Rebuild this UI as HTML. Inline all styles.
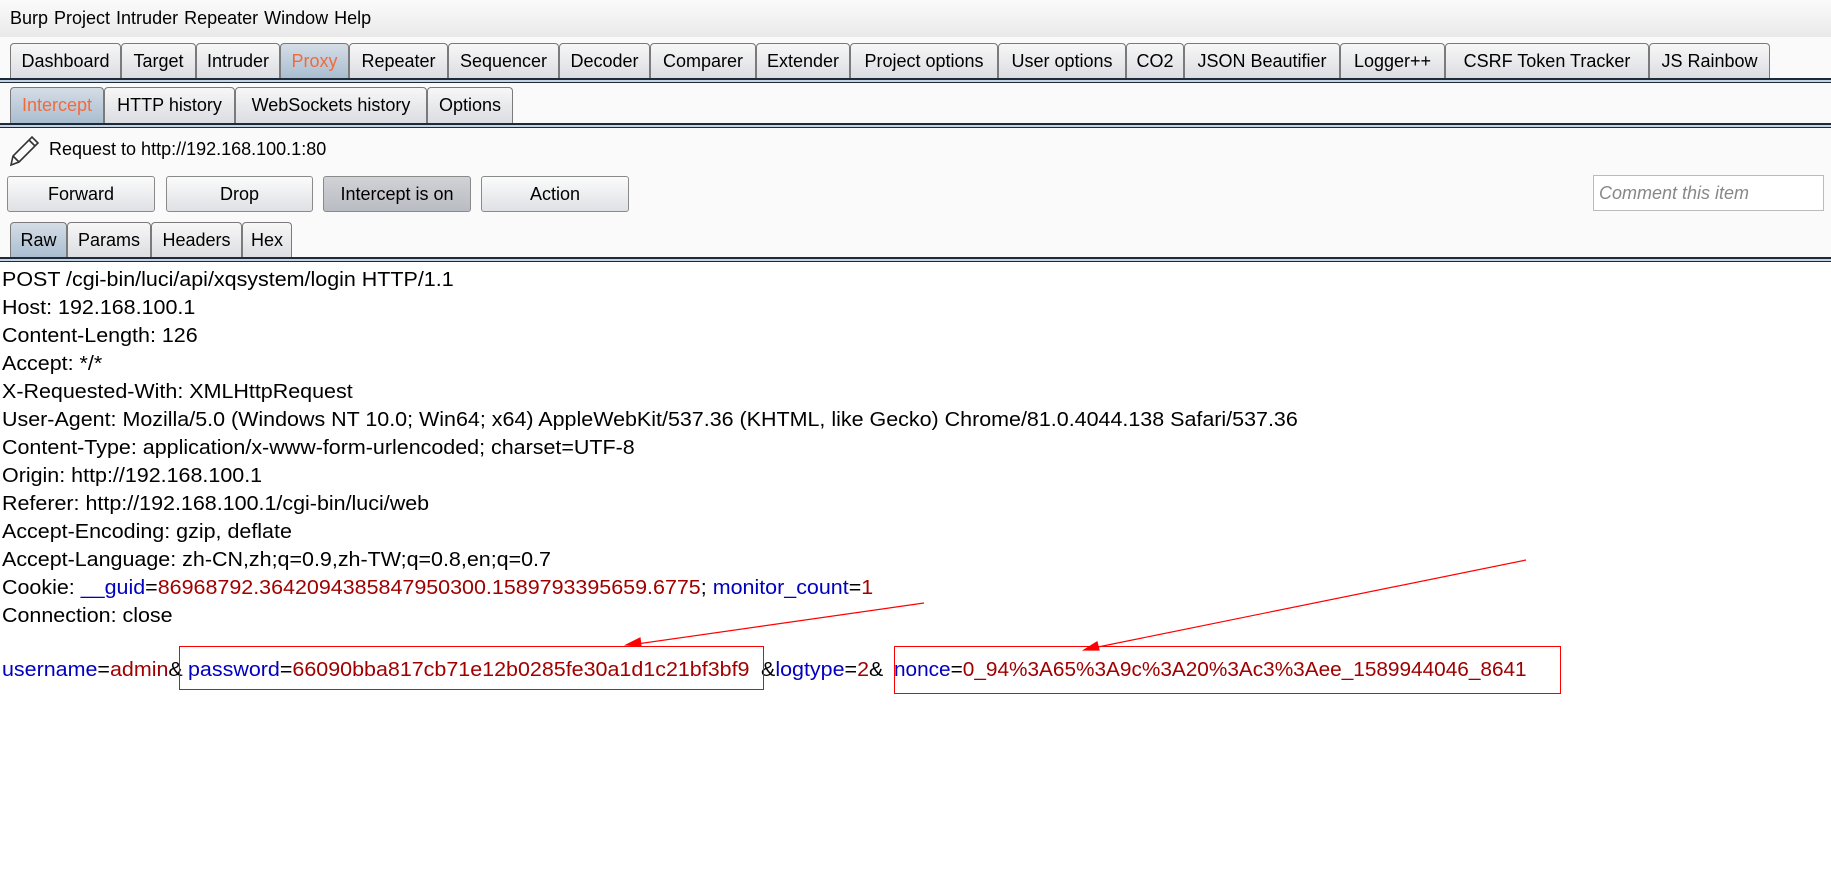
<!DOCTYPE html>
<html><head><meta charset="utf-8"><style>
*{margin:0;padding:0;box-sizing:border-box}
body{width:1831px;height:874px;background:#fff;position:relative;overflow:hidden;font-family:"Liberation Sans",Arial,sans-serif;color:#000}
.a{position:absolute}
.menu{left:0;top:0;width:1831px;height:37px;background:linear-gradient(#fbfbfb,#e9e9e9);font-size:18px;line-height:37px;padding-left:10px;word-spacing:1px}
.bar{left:0;width:1831px;background:#fafafa}
.sep{left:0;width:1831px;height:5px;border-top:2px solid #1e2a38;border-bottom:1px solid #1e2a38;background:#c3d3e3}
.tab{position:absolute;height:35px;border:1px solid #7a7a7a;border-bottom:none;border-radius:4px 4px 0 0;background:linear-gradient(#f7f7f7,#dcdde2);font-size:18px;line-height:35px;text-align:center;white-space:nowrap}
.tab.s{background:linear-gradient(#d5dde6,#a9bdd0);color:#f26a3c}
.btn{position:absolute;top:176px;height:36px;border:1px solid #8a8a8a;border-radius:3px;background:linear-gradient(#fbfbfb,#dfe1e5);font-size:18px;line-height:34px;text-align:center}
.txt{left:2px;font-size:20px;white-space:pre;line-height:28px;transform:scaleX(1.073);transform-origin:0 0}
.b{color:#0000c0}.r{color:#a00000}
</style></head><body>
<div class="a menu">Burp Project Intruder Repeater Window Help</div>
<div class="a bar" style="top:37px;height:220px"></div>
<div class="tab" style="left:10px;width:111px;top:43px">Dashboard</div>
<div class="tab" style="left:121px;width:75px;top:43px">Target</div>
<div class="tab" style="left:196px;width:84px;top:43px">Intruder</div>
<div class="tab s" style="left:280px;width:69px;top:43px">Proxy</div>
<div class="tab" style="left:349px;width:99px;top:43px">Repeater</div>
<div class="tab" style="left:448px;width:111px;top:43px">Sequencer</div>
<div class="tab" style="left:559px;width:91px;top:43px">Decoder</div>
<div class="tab" style="left:650px;width:106px;top:43px">Comparer</div>
<div class="tab" style="left:756px;width:94px;top:43px">Extender</div>
<div class="tab" style="left:850px;width:148px;top:43px">Project options</div>
<div class="tab" style="left:998px;width:128px;top:43px">User options</div>
<div class="tab" style="left:1126px;width:58px;top:43px">CO2</div>
<div class="tab" style="left:1184px;width:156px;top:43px">JSON Beautifier</div>
<div class="tab" style="left:1340px;width:105px;top:43px">Logger++</div>
<div class="tab" style="left:1445px;width:204px;top:43px">CSRF Token Tracker</div>
<div class="tab" style="left:1649px;width:121px;top:43px">JS Rainbow</div>
<div class="a sep" style="top:78px"></div>
<div class="tab s" style="left:10px;width:94px;top:87px;height:36px">Intercept</div>
<div class="tab" style="left:104px;width:131px;top:87px;height:36px">HTTP history</div>
<div class="tab" style="left:235px;width:192px;top:87px;height:36px">WebSockets history</div>
<div class="tab" style="left:427px;width:86px;top:87px;height:36px">Options</div>
<div class="a sep" style="top:123px"></div>
<svg class="a" style="left:7px;top:134px" width="34" height="34" viewBox="0 0 34 34"><path d="M4 31 L6 22 L25 3 L31 9 L12 28 Z M6 22 L12 28 M22 6 L28 12" fill="none" stroke="#333" stroke-width="1.6"/></svg>
<div class="a" style="left:49px;top:139px;font-size:18px">Request to http://192.168.100.1:80</div>
<div class="btn" style="left:7px;width:148px">Forward</div>
<div class="btn" style="left:166px;width:147px">Drop</div>
<div class="btn" style="left:323px;width:148px;background:linear-gradient(#d0d2d6,#b9bcc2)">Intercept is on</div>
<div class="btn" style="left:481px;width:148px">Action</div>
<div class="a" style="left:1593px;top:175px;width:231px;height:36px;border:1px solid #bbb;background:#fff;font-size:18px;font-style:italic;color:#888;line-height:34px;padding-left:5px">Comment this item</div>
<div class="tab s" style="left:10px;width:57px;top:222px;height:36px;color:#000">Raw</div>
<div class="tab" style="left:67px;width:84px;top:222px;height:36px">Params</div>
<div class="tab" style="left:151px;width:91px;top:222px;height:36px">Headers</div>
<div class="tab" style="left:242px;width:50px;top:222px;height:36px">Hex</div>
<div class="a sep" style="top:257px"></div>
<div class="a txt" style="top:266px">POST /cgi-bin/luci/api/xqsystem/login HTTP/1.1
Host: 192.168.100.1
Content-Length: 126
Accept: */*
X-Requested-With: XMLHttpRequest
User-Agent: Mozilla/5.0 (Windows NT 10.0; Win64; x64) AppleWebKit/537.36 (KHTML, like Gecko) Chrome/81.0.4044.138 Safari/537.36
Content-Type: application/x-www-form-urlencoded; charset=UTF-8
Origin: http://192.168.100.1
Referer: http://192.168.100.1/cgi-bin/luci/web
Accept-Encoding: gzip, deflate
Accept-Language: zh-CN,zh;q=0.9,zh-TW;q=0.8,en;q=0.7
Cookie: <span class="b">__guid</span>=<span class="r">86968792.3642094385847950300.1589793395659.6775</span>; <span class="b">monitor_count</span>=<span class="r">1</span>
Connection: close</div>
<div class="a txt" style="top:656px;left:2px"><span class="b">username</span>=<span class="r">admin</span>&amp;</div>
<div class="a txt" style="top:656px;left:188px"><span class="b">password</span>=<span class="r">66090bba817cb71e12b0285fe30a1d1c21bf3bf9</span></div>
<div class="a txt" style="top:656px;left:761px">&amp;<span class="b">logtype</span>=<span class="r">2</span>&amp;</div>
<div class="a txt" style="top:656px;left:894px;transform:scaleX(1.039)"><span class="b">nonce</span>=<span class="r">0_94%3A65%3A9c%3A20%3Ac3%3Aee_1589944046_8641</span></div>
<div class="a" style="left:179px;top:646px;width:585px;height:44px;border:1px solid #f00"></div>
<div class="a" style="left:894px;top:646px;width:667px;height:48px;border:1px solid #f00"></div>
<svg class="a" style="left:0;top:0" width="1831" height="874"><g stroke="#f00" stroke-width="1.2" fill="#f00"><line x1="924" y1="603" x2="630" y2="645"/><path d="M626 645 L640 638 L641 646 Z"/><line x1="1526" y1="560" x2="1088" y2="649"/><path d="M1084 650 L1097 642 L1099 650 Z"/></g></svg>
</body></html>
